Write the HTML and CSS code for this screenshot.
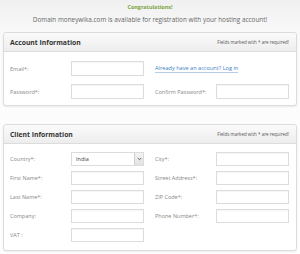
FILE: index.html
```html
<!DOCTYPE html>
<html>
<head>
<title>Register</title>
<link rel="stylesheet" href="styles.css">
</head>
<body>

<div class="notice">
  <h2>Congratulations!</h2>
  <p>Domain moneywika.com is available for registration with your hosting account!</p>
</div>

<div class="panel">
  <div class="panel-head">
    <h3>Account Information</h3>
    <span class="note">Fields marked with * are required!</span>
  </div>
  <div class="panel-body account">
    <label>Email*:</label>
    <input type="text">
    <a class="login-link" href="#">Already have an account? Log in</a>

    <label>Password*:</label>
    <input type="password">
    <label>Confirm Password*:</label>
    <input type="password">
  </div>
</div>

<div class="panel client-panel">
  <div class="panel-head">
    <h3>Client Information</h3>
    <span class="note">Fields marked with * are required!</span>
  </div>
  <div class="panel-body client">
    <label>Country*:</label>
    <div class="select">
      <span>India</span>
      <span class="arrow">
        <svg width="5" height="4" viewBox="0 0 5 4"><path d="M0.7 1 L2.5 2.8 L4.3 1" fill="none" stroke="#555" stroke-width="0.9"/></svg>
      </span>
    </div>
    <label>City*:</label>
    <input type="text">

    <label>First Name*:</label>
    <input type="text">
    <label>Street Address*:</label>
    <input type="text">

    <label>Last Name*:</label>
    <input type="text">
    <label>ZIP Code*:</label>
    <input type="text">

    <label>Company:</label>
    <input type="text">
    <label>Phone Number*:</label>
    <input type="text">

    <label>VAT :</label>
    <input type="text">
  </div>
</div>

</body>
</html>
```

FILE: styles.css
```css
body {
  margin: 0;
  font-family: "Open Sans", sans-serif;
  font-size: 5.5px;
  color: #777;
  background: linear-gradient(#f0f0f0, #fbfbfb 40px, #fff); /* faint grey top */
  min-height: 254px;
}
.notice {
  text-align: center;
  padding-top: 3px;
  margin-bottom: 8px;
}
.notice h2 {
  margin: 0;
  font-size: 5.4px;
  line-height: 8px;
  font-weight: bold;
  color: #7ba43f;
}
.notice p {
  margin: 5px 0 0;
  font-size: 6.4px;
  line-height: 8px;
  color: #666;
}
.panel {
  margin: 0 3px;
  background-color: #fff;
  border: 1px solid #dcdcdc;
  border-radius: 3px;
  box-shadow: 0 1px 2px rgba(0, 0, 0, 0.08);
}
.client-panel {
  margin-top: 18px;
}
.panel-head {
  height: 18px;
  display: flex;
  align-items: center;
  justify-content: space-between;
  padding: 0 7px 0 6px;
  background: linear-gradient(#fbfbfb, #ededed);
  border-bottom: 1px solid #dcdcdc;
  border-radius: 3px 3px 0 0;
}
.panel-head h3 {
  margin: 0;
  font-size: 6.8px;
  font-weight: bold;
  color: #333;
}
.note {
  font-size: 4.5px;
  color: #555;
}
.panel-body {
  display: grid;
  grid-template-columns: 61px 84px 61px 73px; /* 2nd column holds the gap */
  padding: 9px 0 6px 6px;
}
.account {
  row-gap: 8px;
  grid-auto-rows: 15px;
}
.client {
  padding-top: 8px;
  padding-bottom: 8px;
  row-gap: 5px;
  grid-auto-rows: 14px;
}
.panel-body label {
  align-self: center;
  color: #888;
}
.panel-body input {
  box-sizing: border-box;
  width: 73px;
  height: 100%;
  margin: 0;
  padding: 0 3px;
  border: 1px solid #dcdcdc;
  background-color: #fff;
  box-shadow: inset 0 1px 1px rgba(0, 0, 0, 0.04);
  font: inherit;
}
.login-link {
  grid-column: span 2;
  align-self: center;
  justify-self: start;
  font-size: 5.6px;
  color: #3d7fc4;
  text-decoration: none;
  border-bottom: 1px solid #b5cde8;
  line-height: 7px;
}
.select {
  box-sizing: border-box;
  width: 73px;
  display: flex;
  align-items: center;
  justify-content: space-between;
  border: 1px solid #dcdcdc;
  background-color: #fff;
  padding-left: 4px;
  color: #444;
}
.select .arrow {
  width: 8px;
  height: 100%;
  display: flex;
  align-items: center;
  justify-content: center;
  background: linear-gradient(#f4f4f4, #e2e2e2);
  border-left: 1px solid #d0d0d0;
}
```
